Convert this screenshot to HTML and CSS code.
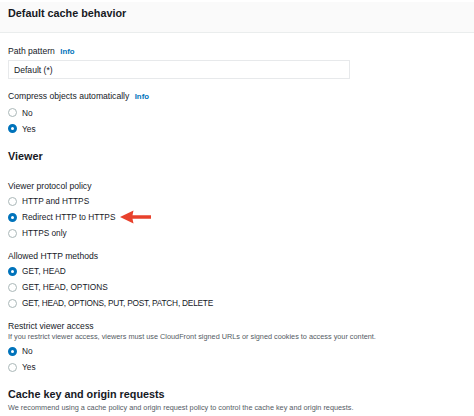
FILE: index.html
```html
<!DOCTYPE html>
<html lang="en">
<head>
<meta charset="utf-8">
<title>Default cache behavior</title>
<link rel="stylesheet" href="styles.css">
</head>
<body>
<header class="panel-head">
  <h2 class="panel-title">Default cache behavior</h2>
</header>
<main class="content">
  <div class="label m-path">Path pattern <span class="info">Info</span></div>
  <div class="input">Default (*)</div>

  <div class="label m-compress">Compress objects automatically <span class="info">Info</span></div>
  <div class="radios m-r1">
    <div class="opt"><span class="radio"></span>No</div>
    <div class="opt"><span class="radio on"></span>Yes</div>
  </div>

  <h3 class="section m-viewer">Viewer</h3>

  <div class="label m-vpp">Viewer protocol policy</div>
  <div class="radios m-r2">
    <div class="opt"><span class="radio"></span>HTTP and HTTPS</div>
    <div class="opt"><span class="radio on"></span>Redirect HTTP to HTTPS
      <svg class="arrow" width="32" height="14" viewBox="0 0 32 14"><polygon points="0,7 13.5,0.5 12.5,5.3 31,5.3 31,8.7 12.5,8.7 13.5,13.5" fill="#e8412c"/></svg>
    </div>
    <div class="opt"><span class="radio"></span>HTTPS only</div>
  </div>

  <div class="label m-allowed">Allowed HTTP methods</div>
  <div class="radios m-r3">
    <div class="opt"><span class="radio on"></span>GET, HEAD</div>
    <div class="opt"><span class="radio"></span>GET, HEAD, OPTIONS</div>
    <div class="opt caps"><span class="radio"></span>GET, HEAD, OPTIONS, PUT, POST, PATCH, DELETE</div>
  </div>

  <div class="label m-restrict">Restrict viewer access</div>
  <div class="desc">If you restrict viewer access, viewers must use CloudFront signed URLs or signed cookies to access your content.</div>
  <div class="radios m-r4">
    <div class="opt"><span class="radio on"></span>No</div>
    <div class="opt"><span class="radio"></span>Yes</div>
  </div>

  <h3 class="section m-cache">Cache key and origin requests</h3>
  <div class="desc m-cdesc">We recommend using a cache policy and origin request policy to control the cache key and origin requests.</div>
</main>
</body>
</html>
```

FILE: styles.css
```css
html, body {
  margin: 0;
  background: #ffffff;
}
body {
  padding-top: 2px;
  font-family: "Liberation Sans", Arial, sans-serif;
  color: #16191f;
  overflow: hidden;
}
.panel-head {
  background: #fafafa;
  border-bottom: 1px solid #eaeded;
  padding: 4px 8px 0;
  height: 26px;
}
.panel-title {
  margin: 0;
  font-size: 10.8px;
  line-height: 15px;
  font-weight: 700;
}
.content {
  padding: 0 8px;
}
.label {
  font-size: 8.6px;
  line-height: 12px;
}
.info {
  color: #0073bb;
  font-weight: 700;
  font-size: 7.8px;
  margin-left: 3px;
}
.input {
  box-sizing: border-box;
  width: 342px;
  height: 19px;
  margin-top: 2px;
  border: 1px solid #e7e9eb;
  padding: 2px 5px 0;
  font-size: 8.6px;
  line-height: 15px;
}
.radios {
  display: flex;
  flex-direction: column;
}
.opt {
  display: flex;
  align-items: center;
  height: 16px;
  font-size: 8.3px;
  line-height: 16px;
}
.opt.caps {
  letter-spacing: -0.22px;
}
.radio {
  box-sizing: border-box;
  flex: none;
  width: 9px;
  height: 9px;
  border-radius: 50%;
  border: 1px solid #aab7b8;
  background: #fff;
  margin-right: 5px;
}
.radio.on {
  border: 3px solid #0073bb;
}
.arrow {
  margin-left: 5px;
  flex: none;
}
.section {
  margin: 0;
  font-size: 10.8px;
  line-height: 15px;
  font-weight: 700;
}
.desc {
  font-size: 7.3px;
  line-height: 10px;
  color: #545b64;
  white-space: nowrap;
}
.m-path { margin-top: 12px; }
.m-compress { margin-top: 11px; }
.m-r1 { margin-top: 1.5px; }
.m-viewer { margin-top: 12.5px; }
.m-vpp { margin-top: 15.7px; }
.m-r2 { margin-top: 1.8px; }
.m-allowed { margin-top: 8.2px; }
.m-r3 { margin-top: 1.5px; }
.m-restrict { margin-top: 8.5px; }
.m-r4 { margin-top: 1.6px; }
.m-cache { margin-top: 11.3px; }
.m-cdesc { margin-top: 1.8px; }
```
